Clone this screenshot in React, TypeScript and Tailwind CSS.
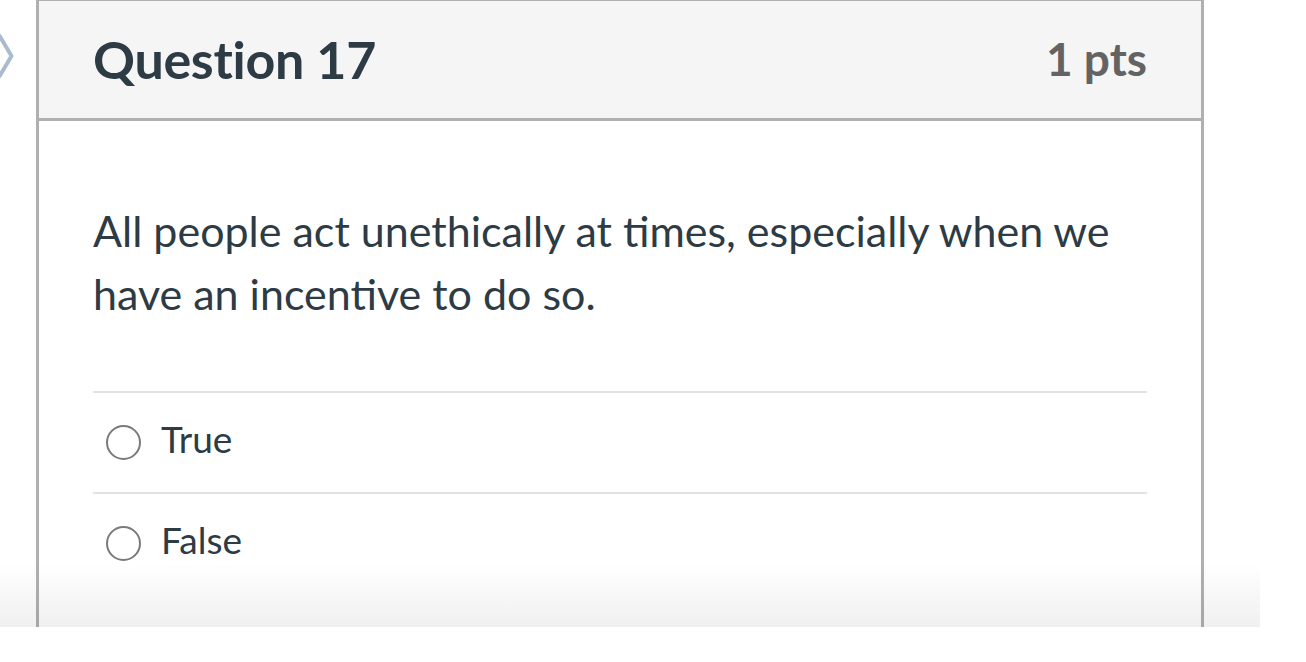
import React from "react";

const answers = ["True", "False"];

const Radio: React.FC = () => (
  <span className="block h-[35px] w-[35px] shrink-0 rounded-full border-2 border-[#7a7a7a] bg-white" />
);

export default function App() {
  return (
    <div className="h-[662px] w-[1306px] bg-white font-['Lato',sans-serif]">
      <div className="relative flex h-[627px] w-[1260px] overflow-hidden bg-white">
        <div className="w-[36px] shrink-0">
          <svg width="36" height="100" viewBox="0 0 36 100" className="block">
            <polyline
              points="-1,35 11.5,56 -1,77"
              fill="none"
              stroke="#a9bbcd"
              strokeWidth="4"
              strokeLinejoin="round"
            />
          </svg>
        </div>

        <div className="flex h-full w-[1168px] flex-col border-x-[3px] border-t border-[#b0b0b0]">
          <div className="flex h-[120px] shrink-0 items-center justify-between border-b-[3px] border-[#b0b0b0] bg-[#f5f5f5] px-[54px] pb-[2px]">
            <h2 className="text-[52px] font-bold tracking-[-0.3px] text-[#2d3b45]">Question 17</h2>
            <span className="text-[46px] font-bold text-[#636363]">1 pts</span>
          </div>

          <div className="px-[54px] pt-[78px]">
            <p className="text-[43px] leading-[63px] text-[#2d3b45]">
              All people act unethically at times, especially when we have an incentive to do so.
            </p>

            <div className="mt-[66px]">
              {answers.map((a) => (
                <div
                  key={a}
                  className="flex h-[101px] items-center gap-[20px] border-t-2 border-[#e2e2e2] pl-[13px]"
                >
                  <Radio />
                  <span className="pb-[8px] text-[37px] text-[#2d3b45]">{a}</span>
                </div>
              ))}
            </div>
          </div>
        </div>

        <div className="pointer-events-none absolute inset-x-0 bottom-0 h-[64px] bg-gradient-to-b from-transparent to-[#000000]/[0.06]" />
      </div>
    </div>
  );
}
